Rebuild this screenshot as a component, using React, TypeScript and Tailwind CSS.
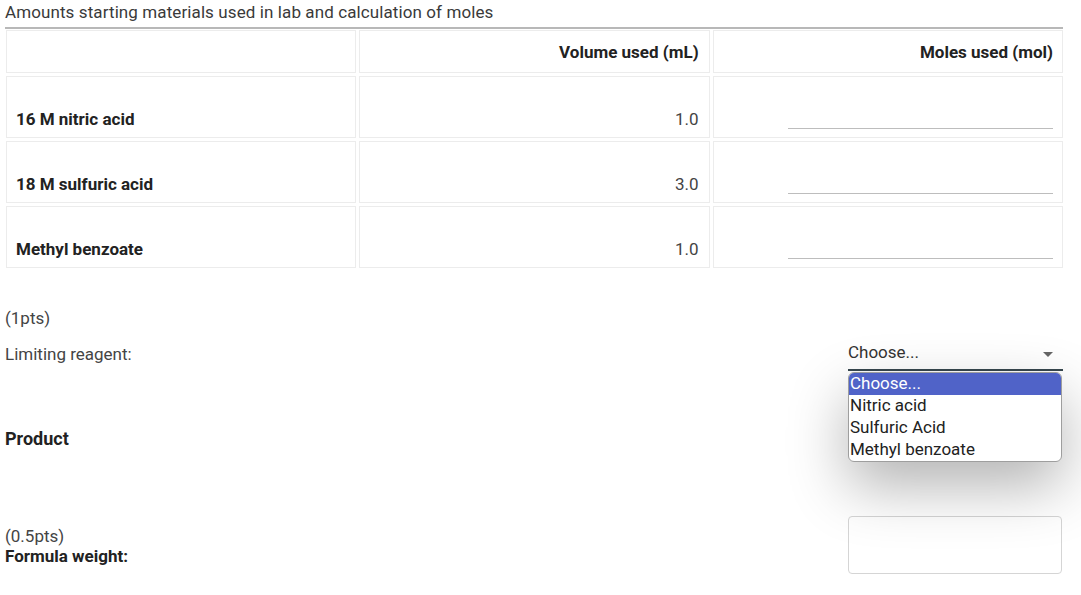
import React from 'react';

const rows = [
  { name: '16 M nitric acid', volume: '1.0' },
  { name: '18 M sulfuric acid', volume: '3.0' },
  { name: 'Methyl benzoate', volume: '1.0' },
];

const options = ['Choose...', 'Nitric acid', 'Sulfuric Acid', 'Methyl benzoate'];

const Cell: React.FC<{ className?: string; children?: React.ReactNode }> = ({ className = '', children }) => (
  <div className={`border border-[#ececec] ${className}`}>{children}</div>
);

export default function App() {
  return (
    <div className="min-h-[595px] bg-white text-[#333] font-['Roboto',sans-serif] text-[17px] leading-[20px]">
      <div className="pl-[5px] pr-[18px]">
        <h2 className="pt-[2px] pb-[5px] border-b-2 border-[#b8b8b8] leading-[20px] text-[17px] tracking-[0.1px] text-[#3a3a3a]">
          Amounts starting materials used in lab and calculation of moles
        </h2>

        <div className="mt-[1px] ml-[1px] grid grid-cols-3 gap-[3px]">
          <Cell className="h-[43px]" />
          <Cell className="h-[43px] flex items-center justify-end pr-[10px] font-bold text-[#222]">
            Volume used (mL)
          </Cell>
          <Cell className="h-[43px] flex items-center justify-end pr-[9px] font-bold text-[#222]">
            Moles used (mol)
          </Cell>
          {rows.map((r) => (
            <React.Fragment key={r.name}>
              <Cell className="h-[62px] flex items-end pb-[8px] pl-[9px] font-bold text-[#222]">{r.name}</Cell>
              <Cell className="h-[62px] flex items-end justify-end pb-[8px] pr-[10px] text-[#444]">{r.volume}</Cell>
              <Cell className="h-[62px] flex items-end justify-end pb-[8px] pr-[9px]">
                <div className="w-[265px] border-b border-[#bdbdbd]" />
              </Cell>
            </React.Fragment>
          ))}
        </div>

        <div className="mt-[40px] text-[#444]">(1pts)</div>

        <div className="mt-[12px] flex items-start justify-between">
          <div className="pt-[4px] text-[#444]">Limiting reagent:</div>
          <div className="relative w-[215px]">
            <div className="flex items-start justify-between h-[31px] border-b-2 border-[#37474f] text-[#333]">
              <span className="pt-[2px]">Choose...</span>
              <svg width="10" height="6" viewBox="0 0 10 6" className="mr-[10px] mt-[12px]">
                <path d="M0 0 L10 0 L5 5 Z" fill="#666" />
              </svg>
            </div>
            <div className="absolute left-0 top-[32px] w-[214px] z-10 rounded-[6px] border border-[#9e9e9e] bg-white overflow-hidden shadow-[0_24px_60px_rgba(0,0,0,0.3)] text-[17px]">
              {options.map((o, i) => (
                <div
                  key={o}
                  className={`h-[22px] leading-[20px] pl-[1px] ${i === 0 ? 'bg-[#5063c8] text-white' : 'text-[#222]'}`}
                >
                  {o}
                </div>
              ))}
            </div>
          </div>
        </div>

        <div className="mt-[56px] text-[18px] leading-[24px] font-bold text-[#222]">Product</div>

        <div className="mt-[65px] flex items-start justify-between">
          <div className="pt-[10px]">
            <div className="text-[#444]">(0.5pts)</div>
            <div className="font-bold text-[#222]">Formula weight:</div>
          </div>
          <div className="w-[214px] h-[58px] mr-[1px] rounded-[4px] border border-[#d5d5d5] bg-white" />
        </div>
      </div>
    </div>
  );
}
